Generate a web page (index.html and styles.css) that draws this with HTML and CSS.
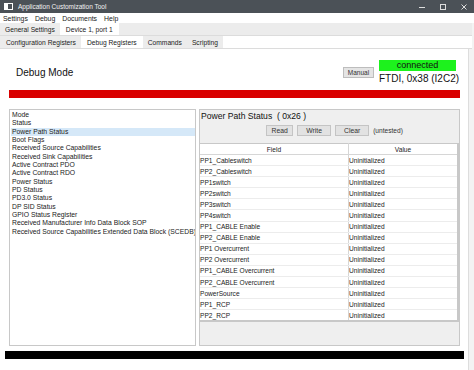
FILE: index.html
```html
<!DOCTYPE html>
<html lang="en">
  <head>
    <meta charset="UTF-8" />
    <title>Application Customization Tool</title>
    <link rel="stylesheet" href="styles.css">
  </head>
  <body>
    <div class="titlebar">
      <svg class="app-icon" width="9" height="7" viewBox="0 0 9 7">
        <rect x="0.5" y="0.5" width="8" height="6" fill="none" stroke="#fff" stroke-width="1" />
        <rect x="1" y="1" width="3" height="5" fill="#fff" />
      </svg>
      <span class="title">Application Customization Tool</span>
      <div class="controls">
        <svg width="8" height="8" viewBox="0 0 8 8"><line x1="1" y1="4.5" x2="7" y2="4.5" stroke="#ddd" /></svg>
        <svg width="8" height="8" viewBox="0 0 8 8"><rect x="1.5" y="1.5" width="5" height="5" fill="none" stroke="#ddd" /></svg>
        <svg width="8" height="8" viewBox="0 0 8 8"><path d="M1.5 1.5 L6.5 6.5 M6.5 1.5 L1.5 6.5" stroke="#ddd" /></svg>
      </div>
    </div>

    <div class="menubar">
      <span>Settings</span>
      <span>Debug</span>
      <span>Documents</span>
      <span>Help</span>
    </div>

    <div class="tabs tabs-top">
      <span class="tab">General Settings</span>
      <span class="tab active">Device 1, port 1</span>
    </div>
    <div class="tabs tabs-sub">
      <span class="tab">Configuration Registers</span>
      <span class="tab active">Debug Registers</span>
      <span class="tab">Commands</span>
      <span class="tab">Scripting</span>
    </div>

    <div class="page">
      <div class="header">
        <span class="mode">Debug Mode</span>
        <button class="manual">Manual</button>
        <div class="conn">
          <div class="connected">connected</div>
          <div class="ftdi">FTDI, 0x38 (I2C2)</div>
        </div>
      </div>

      <div class="red-bar"></div>

      <div class="main">
        <ul class="reg-list">
          <li>Mode</li>
          <li>Status</li>
          <li class="selected">Power Path Status</li>
          <li>Boot Flags</li>
          <li>Received Source Capabilities</li>
          <li>Received Sink Capabilities</li>
          <li>Active Contract PDO</li>
          <li>Active Contract RDO</li>
          <li>Power Status</li>
          <li>PD Status</li>
          <li>PD3.0 Status</li>
          <li>DP SID Status</li>
          <li>GPIO Status Register</li>
          <li>Received Manufacturer Info Data Block SOP</li>
          <li>Received Source Capabilities Extended Data Block (SCEDB) Register</li>
        </ul>

        <div class="panel">
          <div class="panel-title">Power Path Status&nbsp; ( 0x26 )</div>
          <div class="actions">
            <button class="btn-read">Read</button>
            <button>Write</button>
            <button>Clear</button>
            <span>(untested)</span>
          </div>
          <table class="fields">
            <thead>
              <tr><th>Field</th><th>Value</th></tr>
            </thead>
            <tbody>
              <tr><td>PP1_Cableswitch</td><td>Uninitialized</td></tr>
              <tr><td>PP2_Cableswitch</td><td>Uninitialized</td></tr>
              <tr><td>PP1switch</td><td>Uninitialized</td></tr>
              <tr><td>PP2switch</td><td>Uninitialized</td></tr>
              <tr><td>PP3switch</td><td>Uninitialized</td></tr>
              <tr><td>PP4switch</td><td>Uninitialized</td></tr>
              <tr><td>PP1_CABLE Enable</td><td>Uninitialized</td></tr>
              <tr><td>PP2_CABLE Enable</td><td>Uninitialized</td></tr>
              <tr><td>PP1 Overcurrent</td><td>Uninitialized</td></tr>
              <tr><td>PP2 Overcurrent</td><td>Uninitialized</td></tr>
              <tr><td>PP1_CABLE Overcurrent</td><td>Uninitialized</td></tr>
              <tr><td>PP2_CABLE Overcurrent</td><td>Uninitialized</td></tr>
              <tr><td>PowerSource</td><td>Uninitialized</td></tr>
              <tr><td>PP1_RCP</td><td>Uninitialized</td></tr>
              <tr><td>PP2_RCP</td><td>Uninitialized</td></tr>
            </tbody>
          </table>
        </div>
      </div>

      <div class="black-bar"></div>
    </div>
  </body>
</html>
```

FILE: styles.css
```css
body {
  margin: 0;
  width: 474px;
  height: 370px;
  overflow: hidden;
  font-family: "Liberation Sans", Arial, sans-serif;
  background: #f3f3f3;
  color: #111;
}

.titlebar {
  height: 13px;
  background: #4b5157;
  display: flex;
  align-items: center;
  padding-left: 4px;
  color: #f2f2f2;
  font-size: 6.5px;
}

.app-icon {
  margin-right: 5px;
}

.controls {
  margin-left: auto;
  display: flex;
  gap: 13px;
  padding-right: 6px;
}

.menubar {
  height: 10px;
  background: #fff;
  display: flex;
  align-items: center;
  gap: 7px;
  padding-left: 3px;
  font-size: 6.9px;
  color: #222;
}

.tabs {
  height: 12px;
  display: flex;
  align-items: stretch;
  font-size: 6.7px;
  color: #222;
}

.tabs-top {
  background: #ececec;
  border-bottom: 1px solid #dcdcdc;
  margin-right: 2px;
}

.tabs-sub {
  background: #fff;
  border-bottom: 1px solid #dcdcdc;
  margin-right: 2px;
}

.tab {
  display: flex;
  align-items: center;
  padding: 0 5px;
  background: #ececec;
}

.tab.active {
  background: #fff;
  padding: 0 6px;
}

.tabs-top .tab:first-child {
  padding-left: 5px;
}

.tabs-sub .tab:first-child {
  padding-left: 6px;
}

.page {
  background: #fff;
  height: 321px;
  margin-right: 5px;
  border-right: 1px solid #ddd;
}

.header {
  height: 40px;
  display: flex;
  align-items: flex-start;
}

.mode {
  font-size: 10px;
  margin: 18px 0 0 16px;
}

.manual {
  margin: 18px 0 0 auto;
  font-family: inherit;
  font-size: 6.5px;
  height: 11px;
  width: 31px;
  padding: 0;
  background: #e4e4e4;
  border: 1px solid #bdbdbd;
  color: #333;
}

.conn {
  margin: 11px 11px 0 5px;
  width: 78px;
}

.connected {
  background: #1df21d;
  height: 11px;
  line-height: 11px;
  font-size: 9px;
  text-align: center;
  width: 77px;
}

.ftdi {
  font-size: 10px;
  margin-top: 2px;
  white-space: nowrap;
}

.red-bar {
  height: 8px;
  background: #d90000;
  margin: 1px 8px 0 9px;
}

.main {
  display: flex;
  gap: 3px;
  margin: 11px 8px 0 9px;
  height: 237px;
}

.reg-list {
  list-style: none;
  margin: 0;
  padding: 1px 0 0 1px;
  width: 184px;
  border: 1px solid #c8c8c8;
  overflow: hidden;
  font-size: 6.8px;
  color: #222;
}

.reg-list li {
  height: 8.35px;
  line-height: 8.35px;
  white-space: nowrap;
  overflow: hidden;
  padding-left: 1px;
}

.reg-list li.selected {
  background: #d5e8f8;
}

.panel {
  flex: 1;
  background: #efefef;
  border: 1px solid #c8c8c8;
  display: flex;
  flex-direction: column;
}

.panel-title {
  font-size: 8.6px;
  padding: 1px 0 0 1px;
  height: 13px;
}

.actions {
  display: flex;
  align-items: center;
  justify-content: center;
  gap: 4px;
  height: 13px;
  padding-left: 10px;
  font-size: 6.6px;
}

.actions button {
  font-family: inherit;
  font-size: 6.8px;
  height: 11px;
  width: 34px;
  padding: 0;
  background: #e2e2e2;
  border: 1px solid #c4c4c4;
  color: #333;
}

.actions .btn-read {
  width: 27px;
}

.actions span {
  color: #333;
}

.fields {
  margin-top: 6px;
  border-collapse: collapse;
  background: #fff;
  width: 100%;
  font-size: 6.6px;
  color: #222;
  border-top: 1px solid #c8c8c8;
  border-bottom: 2px solid #c8c8c8;
}

.fields th {
  font-weight: normal;
  height: 10px;
  padding: 0;
  border-right: 1px solid #d6d6d6;
  border-bottom: 1px solid #d6d6d6;
}

.fields td {
  height: 10.1px;
  padding: 0;
  border-bottom: 1px solid #ececec;
  border-right: 1px solid #d6d6d6;
}

.fields td:first-child,
.fields th:first-child {
  width: 148px;
}

.fields td:last-child,
.fields th:last-child {
  border-right: 2px solid #c8c8c8;
}

.black-bar {
  height: 8px;
  background: #000;
  margin: 5px 4px 0 5px;
}
```
